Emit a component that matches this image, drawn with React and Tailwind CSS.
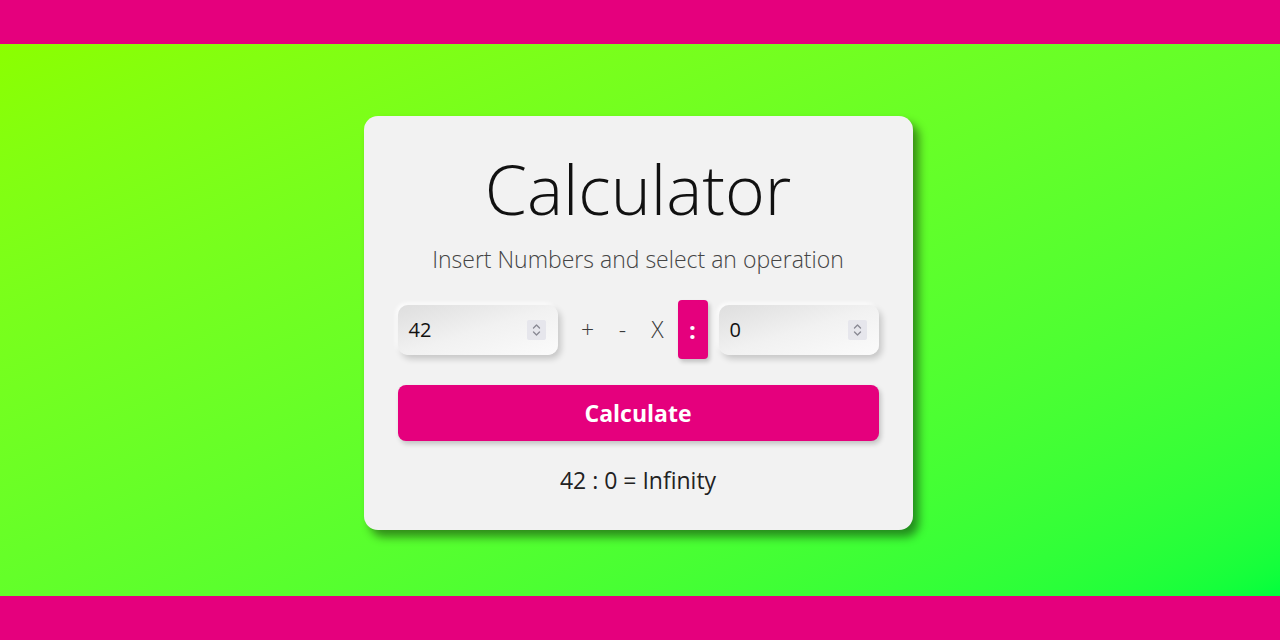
import React, { useState } from 'react';

const Spinner = () => (
    <div className="w-[19px] h-[20px] bg-[#e6e6ec] rounded-[2px] flex items-center justify-center">
        <svg width="9" height="14" viewBox="0 0 9 14" fill="none" stroke="#8a8a94" strokeWidth="1.4" strokeLinecap="round" strokeLinejoin="round">
            <path d="M1.5 5 L4.5 2 L7.5 5" />
            <path d="M1.5 9 L4.5 12 L7.5 9" />
        </svg>
    </div>
);

const NumberBox = ({ value }) => (
    <div className="w-[160px] h-[50px] rounded-[10px] bg-gradient-to-br from-[#dedede] via-[#f1f1f1] to-[#fbfbfb] shadow-[3px_4px_6px_rgba(0,0,0,0.18),-2px_-2px_4px_rgba(255,255,255,0.9)] flex items-center justify-between pl-[11px] pr-[12px]">
        <span className="text-[20px] text-[#111]">{value}</span>
        <Spinner />
    </div>
);

const App = () => {
    const [op] = useState(':');
    const ops = ['+', '-', 'X', ':'];

    return (
        <div className="w-full h-[640px] flex flex-col font-['Open_Sans',sans-serif]">
            <div className="h-[44px] bg-[#e5007d]"></div>
            <main className="flex-1 bg-gradient-to-br from-[#8bff00] to-[#00ff3c] flex justify-center pt-[72px] pr-[4px]">
                <div className="w-[549px] h-[414px] bg-[#f2f2f2] rounded-[14px] shadow-[6px_7px_10px_rgba(0,0,0,0.45)] px-[34px] flex flex-col items-center">
                    <h1 className="mt-[28px] text-[68px] font-light leading-[90px] text-[#111]">Calculator</h1>
                    <p className="mt-[10px] text-[23px] font-light text-[#444] leading-[30px]">Insert Numbers and select an operation</p>

                    {/* Inputs + operations */}
                    <div className="mt-[26px] w-full flex items-center">
                        <NumberBox value="42" />
                        <div className="ml-[15px] flex items-center gap-[5px]">
                            {ops.map((o) => (
                                <button
                                    key={o}
                                    className={`w-[30px] h-[59px] rounded-[4px] flex items-center justify-center ${
                                        o === op
                                            ? 'bg-[#e5007d] text-white font-bold text-[24px] shadow-[2px_3px_4px_rgba(0,0,0,0.2)]'
                                            : 'text-[#3a3a3a] font-light text-[23px]'
                                    }`}
                                >
                                    {o}
                                </button>
                            ))}
                        </div>
                        <div className="ml-[11px]">
                            <NumberBox value="0" />
                        </div>
                    </div>

                    <button className="mt-[26px] w-full h-[56px] rounded-[8px] bg-[#e5007d] text-white text-[23px] font-bold shadow-[2px_3px_5px_rgba(0,0,0,0.2)]">
                        Calculate
                    </button>

                    <p className="mt-[23px] text-[23px] text-[#222] leading-[32px]">42 : 0 = Infinity</p>
                </div>
            </main>
            <div className="h-[44px] bg-[#e5007d]"></div>
        </div>
    );
};

export default App;
